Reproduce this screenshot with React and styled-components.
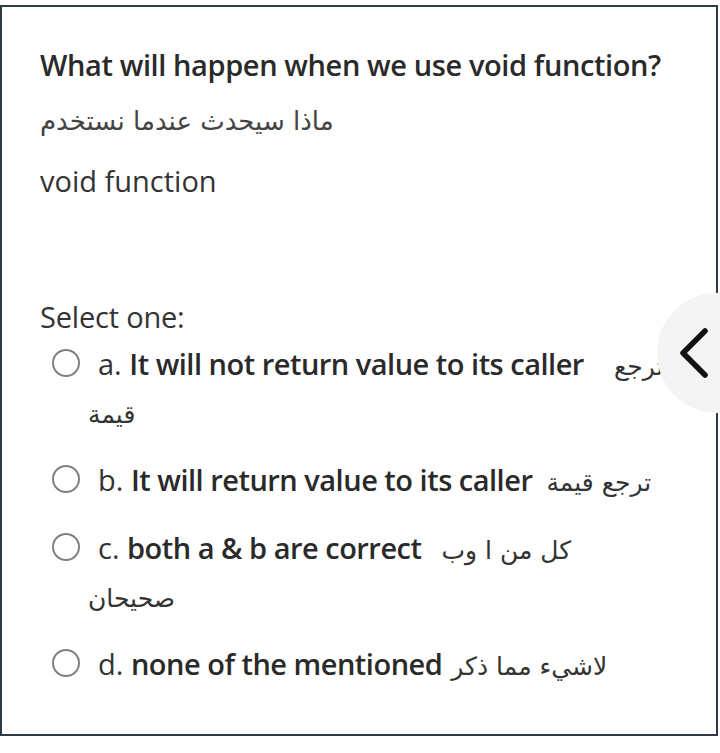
import React from 'react';
import styled, { createGlobalStyle } from 'styled-components';

const GlobalStyle = createGlobalStyle`
  html, body {
    margin: 0;
    padding: 0;
    background: #ffffff;
  }
  body {
    font-family: "Open Sans", "DejaVu Sans", sans-serif;
    color: #333333;
  }
`;

const options = [
  { letter: 'a.', text: 'It will not return value to its caller', ar: ['لا ترجع', 'قيمة'], gap: 30 },
  { letter: 'b.', text: 'It will return value to its caller', ar: ['ترجع قيمة'], gap: 14 },
  { letter: 'c.', text: 'both a & b are correct', ar: ['كل من ا وب', 'صحيحان'], gap: 20 },
  { letter: 'd.', text: 'none of the mentioned', ar: ['لاشيء مما ذكر'], gap: 9 },
];

const App = () => {
  return (
    <Page>
      <GlobalStyle />
      <Card>
        <QuestionTitle>What will happen when we use void function?</QuestionTitle>
        <ArabicLine>ماذا سيحدث عندما نستخدم</ArabicLine>
        <PlainLine>void function</PlainLine>
        <Prompt>Select one:</Prompt>
        <Answers>
          {options.map((o) => (
            <Option key={o.letter}>
              <Radio />
              <Label>
                {o.letter} <strong>{o.text}</strong>
                <Ar $gap={o.gap}>{o.ar[0]}</Ar>
                {o.ar[1] && (
                  <>
                    <br />
                    <Ar $gap={0}>{o.ar[1]}</Ar>
                  </>
                )}
              </Label>
            </Option>
          ))}
        </Answers>
      </Card>
      <NavBubble>
        <svg width="34" height="52" viewBox="0 0 34 52">
          <path d="M28 4 L6 26 L28 48" fill="none" stroke="#111" strokeWidth="5.5" strokeLinecap="round" strokeLinejoin="round" />
        </svg>
      </NavBubble>
    </Page>
  );
};

const Page = styled.div`
  position: relative;
  width: 720px;
  height: 753px;
  overflow: hidden;
  padding-top: 5px;
  box-sizing: border-box;
`;

const Card = styled.div`
  width: 718px;
  height: 731px;
  box-sizing: border-box;
  border: 2px solid #323946;
  padding: 40px 4px 0 38px;
`;

const QuestionTitle = styled.div`
  font-size: 29px;
  font-weight: 600;
  color: #2a2a2a;
  line-height: 36px;
  letter-spacing: -0.4px;
  white-space: nowrap;
`;

const ArabicLine = styled.div`
  margin-top: 20px;
  font-family: "DejaVu Sans", sans-serif;
  font-size: 26px;
  color: #444;
  line-height: 36px;
`;

const PlainLine = styled.div`
  margin-top: 24px;
  font-size: 29px;
  color: #333;
  line-height: 36px;
`;

const Prompt = styled.div`
  margin-top: 100px;
  font-size: 29px;
  letter-spacing: -0.2px;
  color: #333;
  line-height: 36px;
`;

const Answers = styled.div`
  display: flex;
  flex-direction: column;
  gap: 20px;
  padding-left: 12px;
  margin-top: 5px;
`;

const Option = styled.div`
  display: flex;
  align-items: flex-start;
`;

const Radio = styled.span`
  flex: none;
  width: 28px;
  height: 28px;
  margin-top: 9px;
  border: 2px solid #808080;
  border-radius: 50%;
  box-sizing: border-box;
  margin-right: 8px;
`;

const Label = styled.div`
  flex: 1;
  font-size: 29px;
  line-height: 48px;
  color: #333;
  text-indent: 10px;
  white-space: nowrap;
  strong {
    font-weight: 600;
    color: #2a2a2a;
    letter-spacing: -0.5px;
  }
`;

const Ar = styled.span`
  font-family: "DejaVu Sans", sans-serif;
  font-size: 25px;
  line-height: 1;
  color: #333;
  margin-left: ${(p) => p.$gap}px;
`;

const NavBubble = styled.div`
  position: absolute;
  left: 657px;
  top: 293px;
  width: 120px;
  height: 120px;
  border-radius: 50%;
  background: #f4f4f4;
  display: flex;
  align-items: center;
  padding-left: 20px;
  box-sizing: border-box;
`;

export default App;
